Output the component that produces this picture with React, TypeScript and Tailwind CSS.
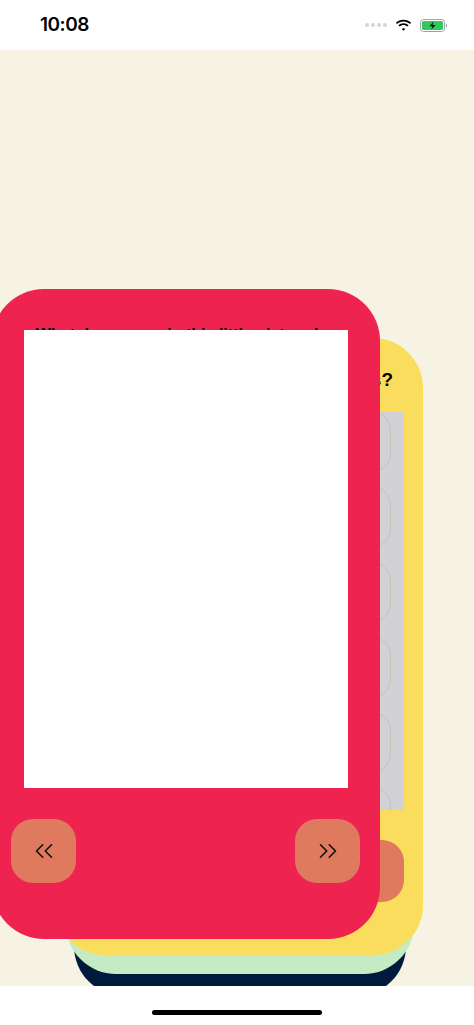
import React from 'react';
import { ChevronsLeft, ChevronsRight } from 'lucide-react';

const WifiIcon: React.FC<{ className?: string }> = (props) => (
  <svg viewBox="0 0 18 13" fill="currentColor" {...props}>
    <path d="M9 2.2c2.6 0 5 1 6.8 2.7l1.3-1.3C15 1.5 12.1.3 9 .3S3 1.5.9 3.6l1.3 1.3C4 3.2 6.4 2.2 9 2.2z" />
    <path d="M9 5.9c1.6 0 3 .6 4.1 1.6l1.3-1.3C13 4.8 11.1 4 9 4S5 4.8 3.6 6.2l1.3 1.3C6 6.5 7.4 5.9 9 5.9z" />
    <path d="M9 9.5c.7 0 1.3.3 1.8.7L9 12 7.2 10.2c.5-.4 1.1-.7 1.8-.7z" />
  </svg>
);

const BatteryIcon: React.FC<{ className?: string }> = (props) => (
  <svg viewBox="0 0 28 13" {...props}>
    <rect x="0.5" y="0.5" width="24" height="12" rx="3" fill="none" stroke="#9ca3af" strokeWidth="1" />
    <rect x="2" y="2" width="21" height="9" rx="1.8" fill="#34c759" />
    <path d="M25.8 4.5v4c.8-.3 1.2-1 1.2-2s-.4-1.7-1.2-2z" fill="#9ca3af" />
    <path d="M13.6 2.6 9.4 7.2h3l-1 3.4 4.2-4.7h-3z" fill="#111" />
  </svg>
);

const StatusBar = () => (
  <div className="h-[50px] bg-white flex items-center justify-between pl-[40px] pr-[26px] shrink-0">
    <span className="text-[19px] font-semibold text-black tracking-tight" style={{ fontFamily: 'Inter, "Liberation Sans", sans-serif' }}>10:08</span>
    <div className="flex items-center gap-[8px]">
      <div className="flex items-center gap-[2px]">
        <span className="w-[4px] h-[4px] rounded-full bg-gray-300" />
        <span className="w-[4px] h-[4px] rounded-full bg-gray-300" />
        <span className="w-[4px] h-[4px] rounded-full bg-gray-300" />
        <span className="w-[4px] h-[4px] rounded-full bg-gray-300" />
      </div>
      <WifiIcon className="w-[17px] h-[13px] text-black" />
      <BatteryIcon className="w-[28px] h-[13px]" />
    </div>
  </div>
);

const options = [0, 1, 2, 3, 4, 5];

export default function App() {
  return (
    <div className="w-[474px] h-[1025px] flex flex-col bg-white overflow-hidden" style={{ fontFamily: '"Liberation Sans", Arial, sans-serif' }}>
      <StatusBar />

      {/* deck area */}
      <div className="relative h-[936px] bg-[#f6f3e4] overflow-hidden">
        {/* back cards */}
        <div className="absolute left-[74px] w-[332px] top-[400px] h-[546px] rounded-[50px] bg-[#001a3b]" />
        <div className="absolute left-[66px] w-[348px] top-[370px] h-[554px] rounded-[50px] bg-[#c4ebc4]" />

        {/* yellow card */}
        <div className="absolute left-[55px] w-[368px] top-[288px] h-[617px] rounded-[50px] bg-[#fadd5d] flex flex-col pt-[30px] pb-[3px] pl-[20px] pr-[19px]">
          <p className="text-[19px] font-bold text-black text-right pr-[11px] leading-[24px] whitespace-nowrap">Which of these are animals?</p>
          <div className="mt-[20px] h-[398px] bg-[#d1d1d6] flex flex-col gap-[15px] pl-[14px] pr-[13px] overflow-hidden">
            {options.map((o) => (
              <div key={o} className="h-[60px] shrink-0 rounded-[18px] border border-[#c7c4b4]" />
            ))}
          </div>
          <div className="mt-[30px] flex justify-end">
            <div className="w-[64px] h-[62px] rounded-[22px] bg-[#e07a5f]" />
          </div>
        </div>

        {/* front red card */}
        <div className="absolute left-[-8px] w-[388px] top-[239px] h-[650px] rounded-[52px] bg-[#ee2350] flex flex-col pt-[36px] px-[32px]">
          <p className="h-[19px] text-[16px] font-bold text-black leading-[20px] whitespace-nowrap overflow-hidden pl-[2px]">
            ¿What do you see in this little picture here?
          </p>
          <div className="relative z-10 mt-[-14px] h-[458px] bg-white" />
          <div className="mt-[31px] flex justify-between ml-[-13px] mr-[-12px]">
            <button className="w-[65px] h-[64px] rounded-[22px] bg-[#e07a5f] flex items-center justify-center">
              <ChevronsLeft className="w-[30px] h-[30px] text-[#111]" strokeWidth={1.3} />
            </button>
            <button className="w-[65px] h-[64px] rounded-[22px] bg-[#e07a5f] flex items-center justify-center">
              <ChevronsRight className="w-[30px] h-[30px] text-[#111]" strokeWidth={1.3} />
            </button>
          </div>
        </div>
      </div>

      {/* home indicator */}
      <div className="flex-1 bg-white flex items-center justify-center">
        <div className="w-[170px] h-[5px] rounded-full bg-black mt-[13px]" />
      </div>
    </div>
  );
}
